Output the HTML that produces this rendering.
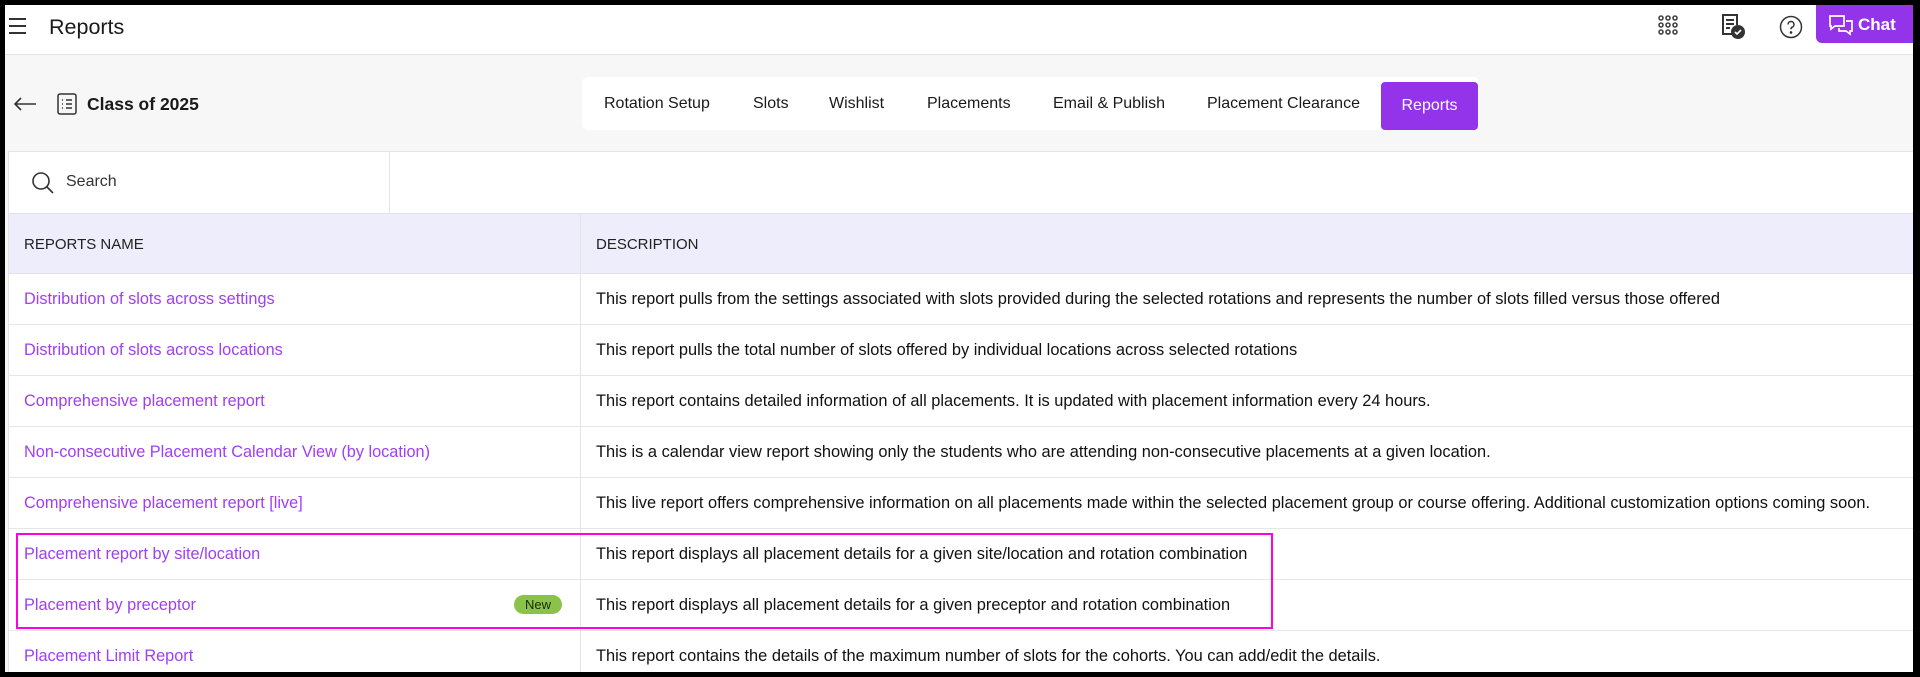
<!DOCTYPE html>
<html><head><meta charset="utf-8"><style>
*{box-sizing:border-box;margin:0;padding:0}
body{width:1920px;height:677px;overflow:hidden;background:#000;font-family:"Liberation Sans",sans-serif;color:#222;position:relative}
#frame{position:absolute;left:5px;top:5px;width:1908px;height:667px;background:#f7f7f7;overflow:hidden}
#top{position:absolute;left:0;top:0;width:100%;height:50px;background:#fff;border-bottom:1px solid #e4e4e4}
#top .t{position:absolute;left:44px;top:10px;font-size:21.5px;color:#1a1a1a}
.ham{position:absolute;left:4px;top:13px;width:17px}
.ham i{display:block;height:2px;background:#333;margin-bottom:5px}
#chat{position:absolute;left:1811px;top:0;width:97px;height:38px;background:#9333ea;color:#fff;border-radius:0 0 0 6px;font-size:17px;font-weight:bold;padding:10px 0 0 42px}
#chat svg{position:absolute;left:12px;top:9px}
#tabs{position:absolute;left:577px;top:72px;width:897px;height:53px;background:#fff;border-radius:6px}
.tab{position:absolute;top:18px;font-size:16px;color:#1a1a1a}
#rep{position:absolute;left:799px;top:5px;width:97px;height:48px;background:#9333ea;color:#fff;border-radius:4px;font-size:16px;text-align:center;line-height:48px}
#cls{position:absolute;left:82px;top:89px;font-size:17.5px;font-weight:bold;color:#1a1a1a}
#panel{position:absolute;left:3px;top:146px;width:1905px;height:530px;background:#fff;border-top:1px solid #e4e4e4;border-left:1px solid #e4e4e4}
#search{position:absolute;left:0;top:0;width:381px;height:61px;border-right:1px solid #e4e4e4}
#search span{position:absolute;left:57px;top:21px;font-size:16px;color:#333}
#thead{position:absolute;left:0;top:61px;width:100%;height:61px;background:#ededfb;border-top:1px solid #e0e0ee;border-bottom:1px solid #e0e0ee}
#thead span{position:absolute;top:22px;font-size:15px;color:#222}
.row{position:absolute;left:0;width:100%;height:51px;border-bottom:1px solid #e6e6e6}
.row .n{position:absolute;left:15px;top:16px;font-size:16.3px;color:#a03ef0;white-space:nowrap}
.row .d{position:absolute;left:587px;top:16px;font-size:16.4px;color:#111;white-space:nowrap}
.vl{position:absolute;left:571px;top:61px;width:1px;height:470px;background:#e4e4e4}
#badge{position:absolute;left:514px;top:595px;width:48px;height:19px;border-radius:10px;background:#8bc34a;font-size:13px;text-align:center;line-height:19px;color:#1a2a0a}
#mag{position:absolute;left:16px;top:533px;width:1257px;height:96px;border:2.5px solid #ff00e0}
</style></head><body>
<div id="frame">
<div id="top">
 <div class="ham"><i></i><i></i><i></i></div>
 <div class="t">Reports</div>
 <svg style="position:absolute;left:1652px;top:9px" width="22" height="22" viewBox="0 0 22 22" fill="none" stroke="#444" stroke-width="1.6"><circle cx="4" cy="4" r="2"/><circle cx="11" cy="4" r="2"/><circle cx="18" cy="4" r="2"/><circle cx="4" cy="11" r="2"/><circle cx="11" cy="11" r="2"/><circle cx="18" cy="11" r="2"/><circle cx="4" cy="18" r="2"/><circle cx="11" cy="18" r="2"/><circle cx="18" cy="18" r="2"/></svg>
 <svg style="position:absolute;left:1713px;top:7px" width="28" height="28" viewBox="0 0 28 28" fill="none" stroke="#333" stroke-width="2"><path d="M14 22H5V3h14v10"/><path d="M8 8h8M8 12h8M8 16h4"/><circle cx="20" cy="20" r="6" fill="#333"/><path d="M17 20l2 2 4-4" stroke="#fff" stroke-width="1.6"/></svg>
 <svg style="position:absolute;left:1774px;top:10px" width="24" height="24" viewBox="0 0 24 24" fill="none" stroke="#333" stroke-width="1.5"><circle cx="12" cy="12" r="10.5"/><path d="M9 9.5a3 3 0 1 1 4 2.8c-.8.4-1 1-1 2"/><circle cx="12" cy="17.5" r=".6" fill="#333"/></svg>
 <div id="chat"><svg width="26" height="22" viewBox="0 0 26 22" fill="none" stroke="#fff" stroke-width="1.7"><path d="M2 2h14v10H7l-4 3v-3H2z"/><path d="M18 7h6v10h-2v3l-4-3h-7v-3"/></svg>Chat</div>
</div>
<svg style="position:absolute;left:8px;top:91px" width="24" height="16" viewBox="0 0 24 16" fill="none" stroke="#333" stroke-width="1.6"><path d="M23 8H2M8 2L2 8l6 6"/></svg>
<svg style="position:absolute;left:52px;top:88px" width="20" height="22" viewBox="0 0 20 22" fill="none" stroke="#333" stroke-width="1.5"><rect x="1" y="1" width="18" height="20" rx="2"/><path d="M5 7h1M9 7h6M5 11h1M9 11h6M5 15h1M9 15h6"/></svg>
<div id="cls">Class of 2025</div>
<div id="tabs">
 <span class="tab" style="left:22px">Rotation Setup</span>
 <span class="tab" style="left:171px">Slots</span>
 <span class="tab" style="left:247px">Wishlist</span>
 <span class="tab" style="left:345px">Placements</span>
 <span class="tab" style="left:471px">Email &amp; Publish</span>
 <span class="tab" style="left:625px">Placement Clearance</span>
 <div id="rep">Reports</div>
</div>
<div id="panel">
 <div id="search"><svg style="position:absolute;left:22px;top:19px" width="24" height="24" viewBox="0 0 24 24" fill="none" stroke="#333" stroke-width="1.6"><circle cx="10" cy="10" r="8"/><path d="M16 16l6 6"/></svg><span>Search</span></div>
 <div id="thead"><span style="left:15px">REPORTS NAME</span><span style="left:587px">DESCRIPTION</span></div>
 <div class="row" style="top:122px"><span class="n">Distribution of slots across settings</span><span class="d">This report pulls from the settings associated with slots provided during the selected rotations and represents the number of slots filled versus those offered</span></div>
 <div class="row" style="top:173px"><span class="n">Distribution of slots across locations</span><span class="d">This report pulls the total number of slots offered by individual locations across selected rotations</span></div>
 <div class="row" style="top:224px"><span class="n">Comprehensive placement report</span><span class="d">This report contains detailed information of all placements. It is updated with placement information every 24 hours.</span></div>
 <div class="row" style="top:275px"><span class="n">Non-consecutive Placement Calendar View (by location)</span><span class="d">This is a calendar view report showing only the students who are attending non-consecutive placements at a given location.</span></div>
 <div class="row" style="top:326px"><span class="n">Comprehensive placement report [live]</span><span class="d">This live report offers comprehensive information on all placements made within the selected placement group or course offering. Additional customization options coming soon.</span></div>
 <div class="row" style="top:377px"><span class="n">Placement report by site/location</span><span class="d">This report displays all placement details for a given site/location and rotation combination</span></div>
 <div class="row" style="top:428px"><span class="n">Placement by preceptor</span><span class="d">This report displays all placement details for a given preceptor and rotation combination</span></div>
 <div class="row" style="top:479px"><span class="n">Placement Limit Report</span><span class="d">This report contains the details of the maximum number of slots for the cohorts. You can add/edit the details.</span></div>
 <div class="vl"></div>
</div>
</div>
<div id="badge">New</div>
<div id="mag"></div>
</body></html>
